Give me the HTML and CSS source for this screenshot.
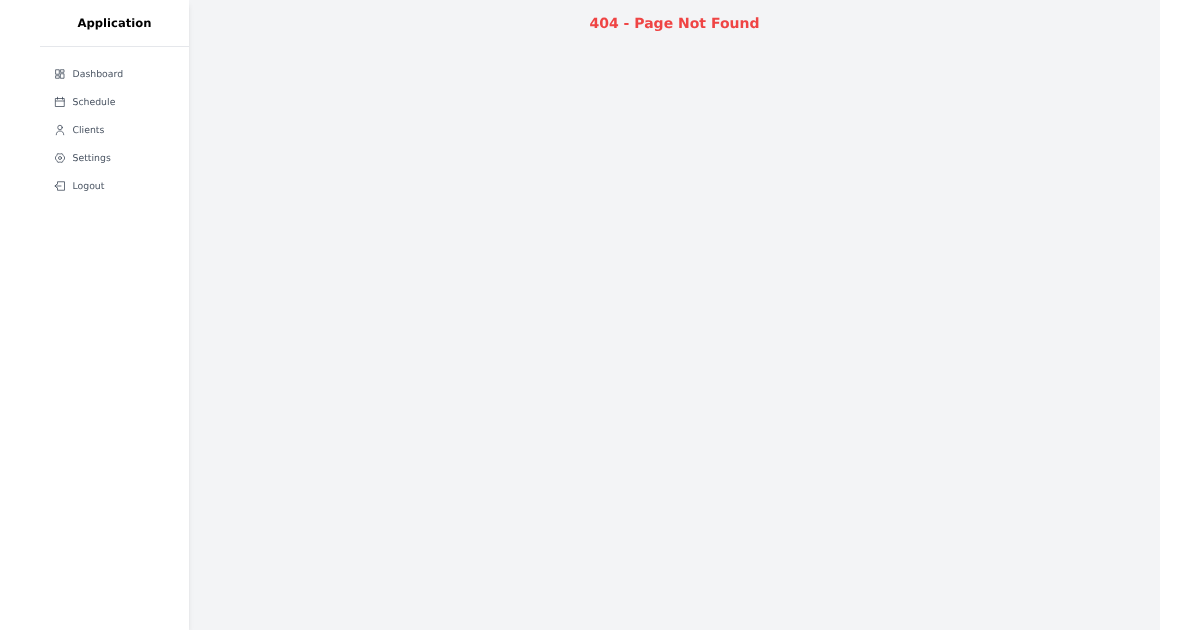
FILE: index.html
```html
<!DOCTYPE html>
<html lang="en">
<head>
    <meta charset="UTF-8">
    <title>Application</title>
    <link rel="stylesheet" href="styles.css">
</head>
<body>
    <div class="layout">
        <!-- Sidebar -->
        <aside class="sidebar">
            <div class="brand">Application</div>
            <nav class="side-nav">
                <a class="nav-item" href="#">
                    <svg class="nav-icon" viewBox="0 0 24 24"><path d="M4 3.500h6.500v9H4zM13.500 3.500H20v5h-6.500zM13.500 11.500H20v9h-6.500zM4 15.500h6.500v5H4z"/></svg>
                    <span>Dashboard</span>
                </a>
                <a class="nav-item" href="#">
                    <svg class="nav-icon" viewBox="0 0 24 24"><path d="M7 2.500v4M17 2.500v4M3.500 5h17v16h-17zM3.500 10h17"/></svg>
                    <span>Schedule</span>
                </a>
                <a class="nav-item" href="#">
                    <svg class="nav-icon" viewBox="0 0 24 24"><circle cx="12" cy="7" r="4.500"/><path d="M4.500 21.500c0-4.500 3-7.500 7.500-7.500s7.500 3 7.500 7.500"/></svg>
                    <span>Clients</span>
                </a>
                <a class="nav-item" href="#">
                    <svg class="nav-icon" viewBox="0 0 24 24"><path d="M7.500 3.500h3l1.500 1 1.500-1h3l2 3.500 2.500 3v4l-2.500 3-2 3.500h-3l-1.500-1-1.500 1h-3l-2-3.500-2.500-3v-4l2.500-3z"/><circle cx="12" cy="12" r="3"/></svg>
                    <span>Settings</span>
                </a>
                <a class="nav-item" href="#">
                    <svg class="nav-icon" viewBox="0 0 24 24"><path d="M7 8V3.500h14v17H7V16M14 12H2M5.500 8.500 2 12l3.500 3.500"/></svg>
                    <span>Logout</span>
                </a>
            </nav>
        </aside>

        <!-- Main content -->
        <main class="content">
            <h1 class="not-found">404 - Page Not Found</h1>
        </main>
    </div>
</body>
</html>
```

FILE: styles.css
```css
html, body {
    height: 100%;
}

body {
    margin: 0;
    background-color: #fff;
    font-family: "DejaVu Sans", sans-serif;
    text-rendering: geometricPrecision;
}

.layout {
    display: flex;
    width: 1120px;
    height: 630px;
    margin: 0 auto;
    overflow: hidden;
    will-change: transform;
}

/* Sidebar */
.sidebar {
    width: 149px;
    flex-shrink: 0;
    background-color: #fff;
    box-shadow: 0 4px 6px -1px rgba(0, 0, 0, 0.1), 0 2px 4px -2px rgba(0, 0, 0, 0.1);
    position: relative;
    z-index: 1;
}

.brand {
    height: 46px;
    display: flex;
    align-items: center;
    justify-content: center;
    border-bottom: 1px solid #e5e7eb;
    font-size: 11.6px;
    font-weight: 700;
    color: #000;
}

.side-nav {
    display: flex;
    flex-direction: column;
    padding-top: 13px;
}

.nav-item {
    display: flex;
    align-items: center;
    gap: 6.5px;
    height: 28px;
    padding-left: 14px;
    font-size: 9.33px;
    color: #4b5563;
    text-decoration: none;
}

.nav-icon {
    width: 12px;
    height: 12px;
    fill: none;
    stroke: #374151;
    stroke-width: 1.5;
    stroke-linecap: round;
    stroke-linejoin: round;
}

/* Main content */
.content {
    flex: 1;
    background-color: #f3f4f6;
}

.not-found {
    margin: 0;
    padding-top: 15px;
    text-align: center;
    font-size: 14px;
    line-height: 18px;
    font-weight: 700;
    color: #ef4444;
}
```
